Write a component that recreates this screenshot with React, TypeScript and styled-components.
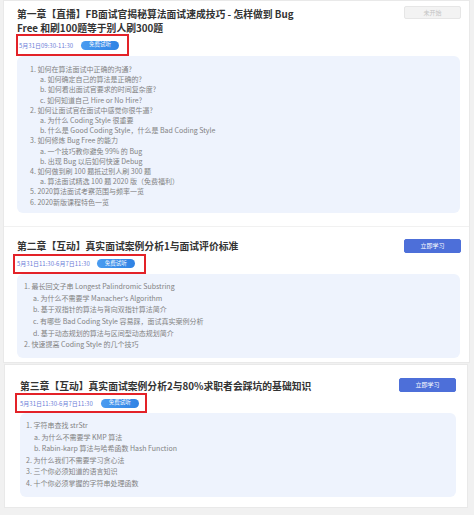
import React from 'react';
import styled, { createGlobalStyle } from 'styled-components';

const GlobalStyle = createGlobalStyle`
  html, body {
    margin: 0;
    padding: 0;
    background: #f1f1f1;
  }
  body {
    font-family: "Noto Sans CJK SC", "Noto Sans", sans-serif;
    color: #333;
  }
`;

const Page = styled.div`
  width: 474px;
  height: 515px;
  overflow: hidden;
  display: flex;
  flex-direction: column;
  gap: 1px;
`;

const Panel = styled.div<{ $left: number; $width: number }>`
  margin-left: ${p => p.$left}px;
  width: ${p => p.$width}px;
  box-sizing: border-box;
  background: #fff;
  border: 1px solid #e9e9e9;
`;

const Chapter = styled.section<{ $pad: string; $divider?: boolean }>`
  padding: ${p => p.$pad};
  border-top: ${p => (p.$divider ? '1px solid #f1f1f1' : 'none')};
`;

const Header = styled.div`
  display: flex;
  align-items: flex-start;
  justify-content: space-between;
  gap: 12px;
`;

const Title = styled.h2`
  margin: 0;
  font-size: 9.8px;
  line-height: 14px;
  font-weight: 700;
  color: #333;
`;

const ActionButton = styled.button<{ $disabled?: boolean; $shift: number }>`
  flex-shrink: 0;
  width: 57px;
  height: ${p => (p.$disabled ? 13 : 14)}px;
  margin-top: ${p => p.$shift}px;
  padding: 0;
  box-sizing: border-box;
  border: 1px solid ${p => (p.$disabled ? '#e6e6e6' : '#4d6fd9')};
  border-radius: 2px;
  background: ${p => (p.$disabled ? '#f3f3f3' : '#4d6fd9')};
  color: ${p => (p.$disabled ? '#c4c4c4' : '#fff')};
  font-family: inherit;
  font-size: 6px;
  line-height: 1;
`;

const Highlight = styled.div<{ $shift: number; $top: number; $height: number; $padLeft: number; $padRight: number; $gap: number }>`
  display: flex;
  width: fit-content;
  align-items: center;
  gap: ${p => p.$gap}px;
  box-sizing: border-box;
  height: ${p => p.$height}px;
  margin-left: ${p => p.$shift}px;
  margin-top: ${p => p.$top}px;
  padding: 0 ${p => p.$padRight}px 0 ${p => p.$padLeft}px;
  border: 2px solid #e32228;
`;

const DateText = styled.span`
  font-size: 6px;
  color: #6b7dd8;
  white-space: nowrap;
`;

const TrialPill = styled.span`
  display: flex;
  align-items: center;
  justify-content: center;
  width: 38px;
  height: 9px;
  border-radius: 5px;
  background: linear-gradient(90deg, #4a9cf0, #2f82e4);
  color: #fff;
  font-size: 5.5px;
  line-height: 1;
`;

const Outline = styled.div<{ $pad: string; $lh: number; $right: number }>`
  margin-right: ${p => p.$right}px;
  padding: ${p => p.$pad};
  border-radius: 6px;
  background: #eef3fd;
  font-size: 7px;
  line-height: ${p => p.$lh}px;
  color: #828282;
`;

const Item = styled.div<{ $indent: number }>`
  padding-left: ${p => p.$indent}px;
  white-space: nowrap;
`;

type Line = { text: string; sub?: boolean };

const chapterOne: Line[] = [
  { text: '1. 如何在算法面试中正确的沟通?' },
  { text: 'a. 如何确定自己的算法是正确的?', sub: true },
  { text: 'b. 如何看出面试官要求的时间复杂度?', sub: true },
  { text: 'c. 如何知道自己 Hire or No Hire?', sub: true },
  { text: '2. 如何让面试官在面试中感觉你很牛逼?' },
  { text: 'a. 为什么 Coding Style 很重要', sub: true },
  { text: 'b. 什么是 Good Coding Style，什么是 Bad Coding Style', sub: true },
  { text: '3. 如何修炼 Bug Free 的能力' },
  { text: 'a. 一个技巧教你避免 99% 的 Bug', sub: true },
  { text: 'b. 出现 Bug 以后如何快速 Debug', sub: true },
  { text: '4. 如何做到刷 100 题抵过别人刷 300 题' },
  { text: 'a. 算法面试精选 100 题 2020 版（免费福利）', sub: true },
  { text: '5. 2020算法面试考察范围与频率一览' },
  { text: '6. 2020新版课程特色一览' },
];

const chapterTwo: Line[] = [
  { text: '1. 最长回文子串 Longest Palindromic Substring' },
  { text: "a. 为什么不需要学 Manacher's Algorithm", sub: true },
  { text: 'b. 基于双指针的算法与背向双指针算法简介', sub: true },
  { text: 'c. 有哪些 Bad Coding Style 容易踩，面试真实案例分析', sub: true },
  { text: 'd. 基于动态规划的算法与区间型动态规划简介', sub: true },
  { text: '2. 快速提高 Coding Style 的几个技巧' },
];

const chapterThree: Line[] = [
  { text: '1. 字符串查找 strStr' },
  { text: 'a. 为什么不需要学 KMP 算法', sub: true },
  { text: 'b. Rabin-karp 算法与哈希函数 Hash Function', sub: true },
  { text: '2. 为什么我们不需要学习贪心法' },
  { text: '3. 三个你必须知道的语言知识' },
  { text: '4. 十个你必须掌握的字符串处理函数' },
];

const renderLines = (lines: Line[], subIndent: number) =>
  lines.map(line => (
    <Item key={line.text} $indent={line.sub ? subIndent : 0}>
      {line.text}
    </Item>
  ));

const App: React.FC = () => {
  return (
    <>
      <GlobalStyle />
      <Page>
        <Panel $left={3} $width={467}>
          <Chapter $pad="6px 8px 13px 13px">
            <Header>
              <Title>
                第一章【直播】FB面试官揭秘算法面试速成技巧 - 怎样做到 Bug
                <br />
                Free 和刷100题等于别人刷300题
              </Title>
              <ActionButton $disabled $shift={-1}>未开始</ActionButton>
            </Header>
            <Highlight $shift={-1} $top={-1} $height={22} $padLeft={1} $padRight={8} $gap={8}>
              <DateText>5月31日09:30-11:30</DateText>
              <TrialPill>免费试听</TrialPill>
            </Highlight>
            <Outline $pad="8px 0 6px 13px" $lh={10.2} $right={1}>
              {renderLines(chapterOne, 10)}
            </Outline>
          </Chapter>

          <Chapter $pad="12px 8px 4px 13px" $divider>
            <Header>
              <Title>第二章【互动】真实面试案例分析1与面试评价标准</Title>
              <ActionButton $shift={0}>立即学习</ActionButton>
            </Header>
            <Highlight $shift={-4} $top={1} $height={20} $padLeft={2} $padRight={9} $gap={7}>
              <DateText>5月31日11:30-6月7日11:30</DateText>
              <TrialPill>免费试听</TrialPill>
            </Highlight>
            <Outline $pad="7px 0 7px 7px" $lh={11.7} $right={1}>
              {renderLines(chapterTwo, 9)}
            </Outline>
          </Chapter>
        </Panel>

        <Panel $left={4} $width={464}>
          <Chapter $pad="14px 11px 10px 15px">
            <Header>
              <Title>第三章【互动】真实面试案例分析2与80%求职者会踩坑的基础知识</Title>
              <ActionButton $shift={-1}>立即学习</ActionButton>
            </Header>
            <Highlight $shift={-5} $top={0} $height={20} $padLeft={3} $padRight={6} $gap={8}>
              <DateText>5月31日11:30-6月7日11:30</DateText>
              <TrialPill>免费试听</TrialPill>
            </Highlight>
            <Outline $pad="7px 0 7px 6px" $lh={11.6} $right={0}>
              {renderLines(chapterThree, 8)}
            </Outline>
          </Chapter>
        </Panel>
      </Page>
    </>
  );
};

export default App;
